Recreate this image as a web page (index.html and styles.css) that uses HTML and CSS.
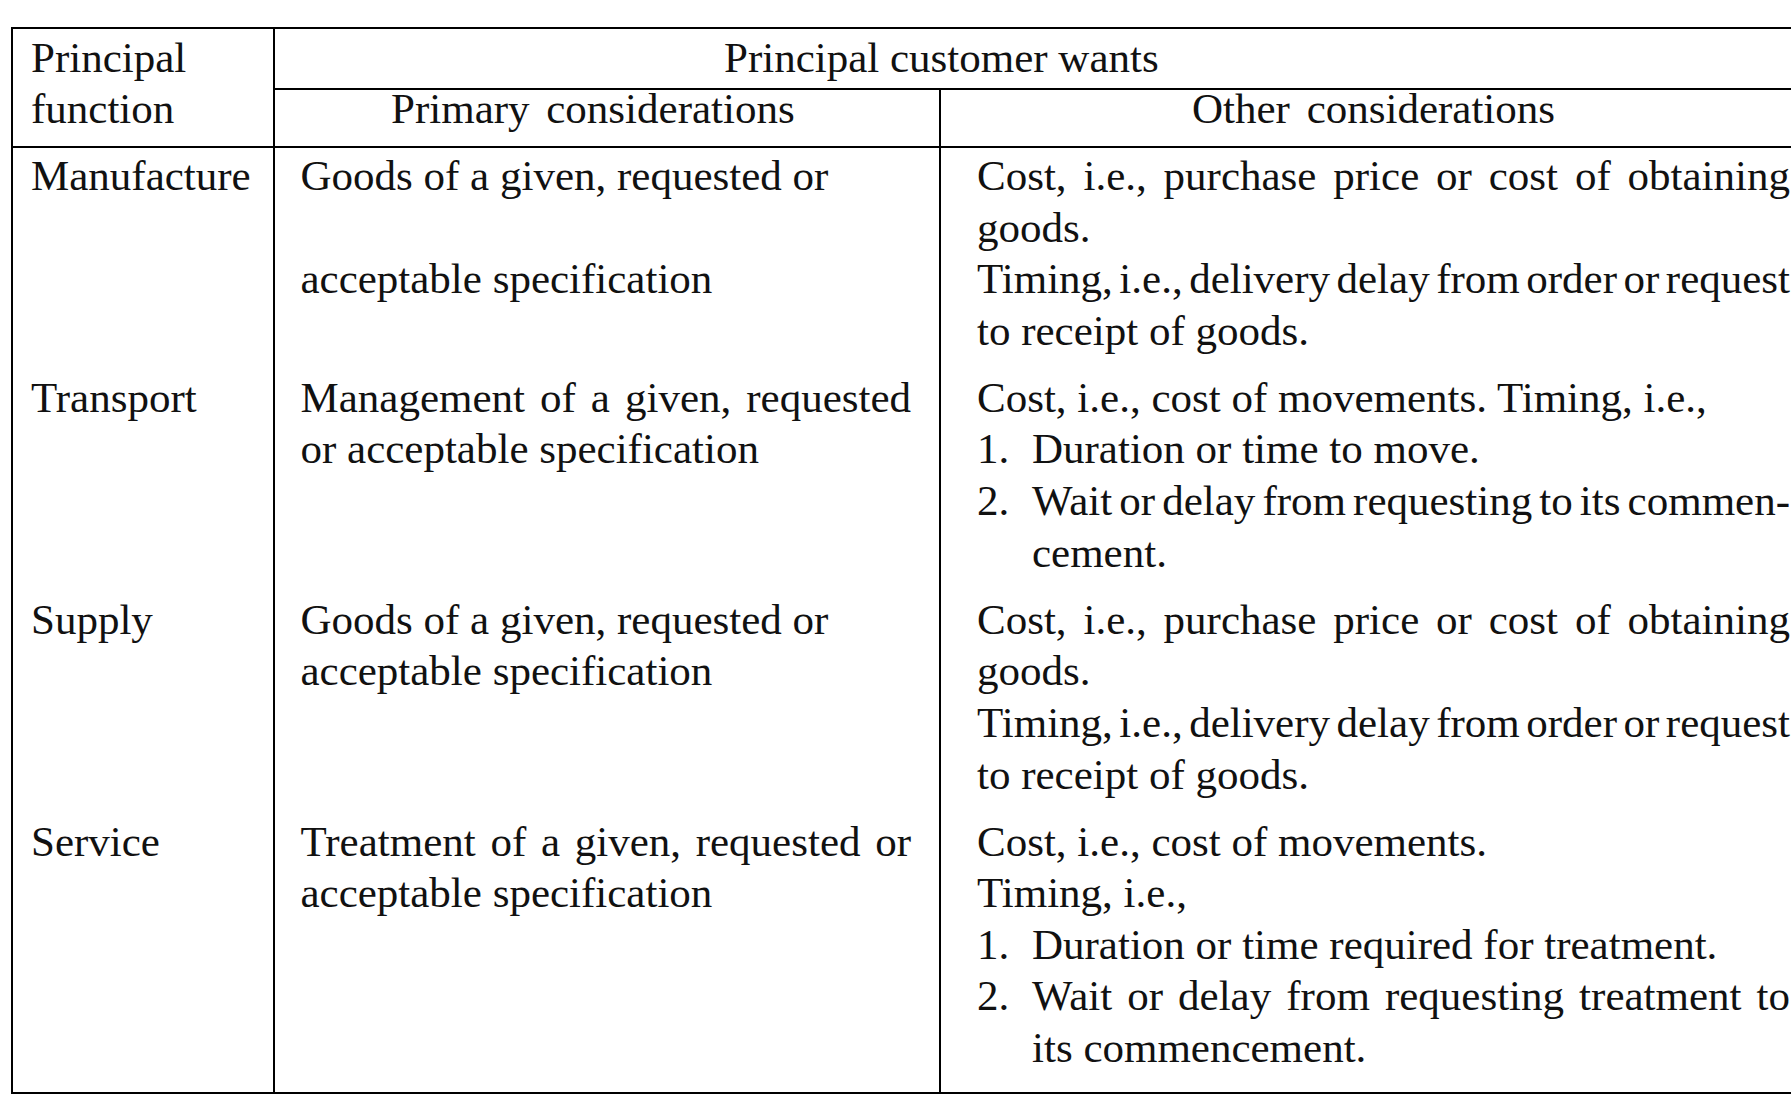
FILE: index.html
```html
<!DOCTYPE html>
<html lang="en">
<head>
<meta charset="utf-8">
<title>Principal functions and customer wants</title>
<link rel="stylesheet" href="styles.css">
</head>
<body>
<div class="page">
  <div class="tbl">
    <div class="cell h-func"><div>Principal</div><div>function</div></div>
    <div class="cell h-wants">Principal customer wants</div>
    <div class="cell h-primary">Primary considerations</div>
    <div class="cell h-other">Other considerations</div>

    <div class="cell c1">Manufacture</div>
    <div class="cell c2">
      <div class="ln">Goods of a given, requested or</div>
      <div class="ln">&nbsp;</div>
      <div class="ln">acceptable specification</div>
    </div>
    <div class="cell c3">
      <div class="ln j">Cost, i.e., purchase price or cost of obtaining</div>
      <div class="ln">goods.</div>
      <div class="ln j tight">Timing, i.e., delivery delay from order or request</div>
      <div class="ln">to receipt of goods.</div>
    </div>

    <div class="cell c1">Transport</div>
    <div class="cell c2">
      <div class="ln j">Management of a given, requested</div>
      <div class="ln">or acceptable specification</div>
    </div>
    <div class="cell c3">
      <div class="ln">Cost, i.e., cost of movements. Timing, i.e.,</div>
      <div class="item"><span class="num">1.</span><div class="txt"><div class="ln">Duration or time to move.</div></div></div>
      <div class="item"><span class="num">2.</span><div class="txt"><div class="ln j tight">Wait or delay from requesting to its commen-</div><div class="ln">cement.</div></div></div>
    </div>

    <div class="cell c1">Supply</div>
    <div class="cell c2">
      <div class="ln">Goods of a given, requested or</div>
      <div class="ln">acceptable specification</div>
    </div>
    <div class="cell c3">
      <div class="ln j">Cost, i.e., purchase price or cost of obtaining</div>
      <div class="ln">goods.</div>
      <div class="ln j tight">Timing, i.e., delivery delay from order or request</div>
      <div class="ln">to receipt of goods.</div>
    </div>

    <div class="cell c1 last">Service</div>
    <div class="cell c2 last">
      <div class="ln j">Treatment of a given, requested or</div>
      <div class="ln">acceptable specification</div>
    </div>
    <div class="cell c3 last">
      <div class="ln">Cost, i.e., cost of movements.</div>
      <div class="ln">Timing, i.e.,</div>
      <div class="item"><span class="num">1.</span><div class="txt"><div class="ln">Duration or time required for treatment.</div></div></div>
      <div class="item"><span class="num">2.</span><div class="txt"><div class="ln j">Wait or delay from requesting treatment to</div><div class="ln">its commencement.</div></div></div>
    </div>
  </div>
</div>
</body>
</html>
```

FILE: styles.css
```css
* {
  box-sizing: border-box;
}

html,
body {
  margin: 0;
  padding: 0;
  background: #ffffff;
}

.page {
  width: 100%;
  overflow: hidden;
  padding: 27px 0 0 11px;
}

.tbl {
  display: grid;
  grid-template-columns: 262px 666px 871px;
  grid-template-rows: 61px 58px;
  width: 1803px;
  border: 2px solid #000;
  font-family: "Liberation Serif", "Times New Roman", serif;
  font-size: 43px;
  line-height: 51.6px;
  color: #111;
}

.h-func {
  grid-row: 1 / 3;
  border-right: 2px solid #000;
  border-bottom: 2px solid #000;
  padding: 2.5px 0 0 18px;
}

.h-wants {
  grid-column: 2 / 4;
  border-bottom: 2px solid #000;
  padding: 2.5px 0 0 449px;
}

.h-primary {
  border-right: 2px solid #000;
  border-bottom: 2px solid #000;
  line-height: 36px;
  padding: 1px 0 0 116px;
  word-spacing: 6px;
}

.h-other {
  border-bottom: 2px solid #000;
  line-height: 36px;
  padding: 1px 0 0 251px;
  word-spacing: 6px;
}

.c1 {
  border-right: 2px solid #000;
  padding: 2px 0 13.5px 18px;
}

.c2 {
  border-right: 2px solid #000;
  padding: 2px 28px 13.5px 25.5px;
}

.c3 {
  padding: 2px 22px 13.5px 36px;
}

.cell.last {
  padding-bottom: 18px;
}

.j {
  text-align: justify;
  text-align-last: justify;
}

.tight {
  word-spacing: -5px;
}

.item {
  display: flex;
}

.num {
  flex: none;
  width: 55px;
}

.txt {
  flex: 1;
  min-width: 0;
}
```
